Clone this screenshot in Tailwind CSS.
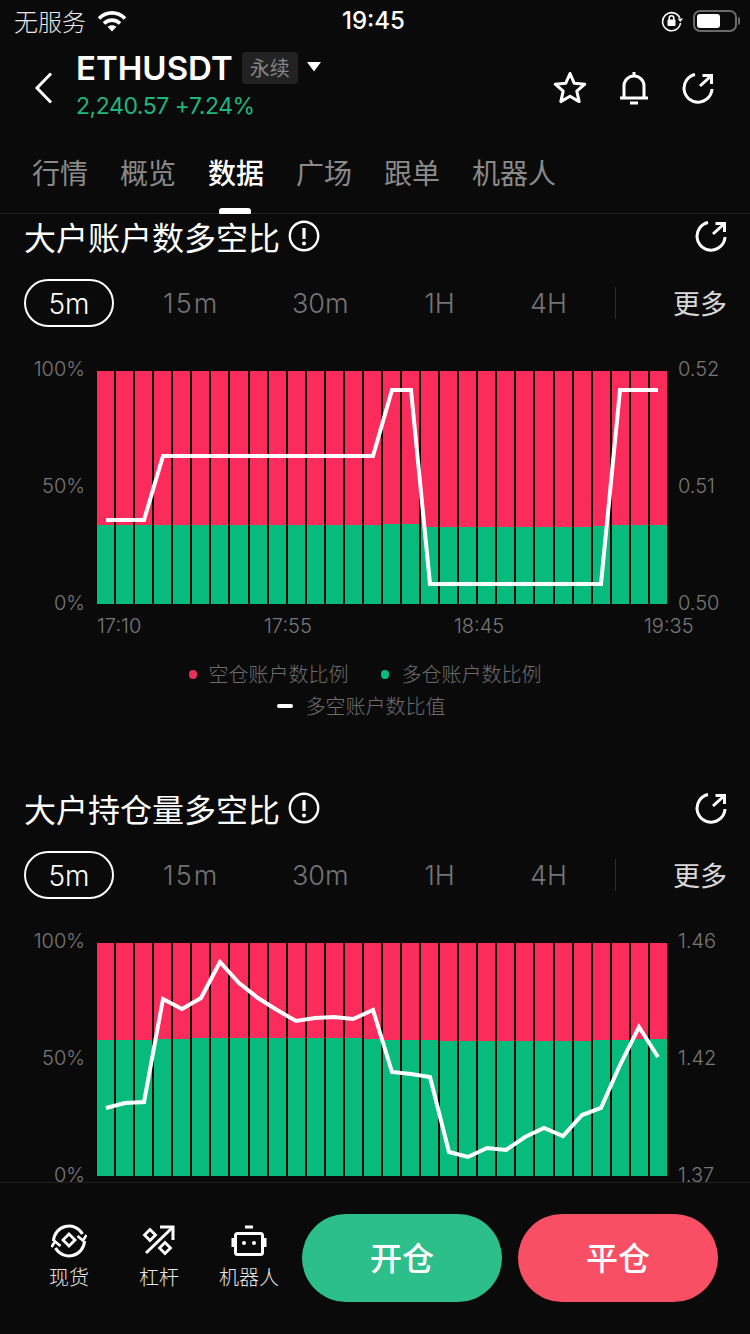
<!DOCTYPE html>
<html lang="zh-CN">
<head>
  <meta charset="UTF-8">
  <meta name="viewport" content="width=device-width, initial-scale=1.0">
  <title>ETHUSDT 数据</title>
  <script src="https://cdn.jsdelivr.net/npm/@tailwindcss/browser@4"></script>
</head>
<body class="bg-[#0a0a0a]">
  <div class="w-[750px] h-[1334px] flex flex-col overflow-hidden bg-[#0a0a0a] text-white font-['Inter','Noto_Sans_CJK_SC',sans-serif]">

    <!-- Status bar -->
    <div class="h-[42px] shrink-0 relative flex items-center pl-[14px] pr-[13px]">
      <span class="text-[24px] leading-[40px] text-[#e8e8e8] font-['Noto_Sans_CJK_SC',sans-serif] font-light">无服务</span>
      <svg class="ml-[11px] w-[30px] h-[22px]" viewBox="0 0 30 22" fill="none" stroke="#fff" stroke-width="3.6">
        <path d="M2 8.5 C9.5 1 20.5 1 28 8.5"/>
        <path d="M7 13.5 C11.5 9 18.5 9 23 13.5"/>
        <path d="M15 21.5 L10.5 16.8 C13 14.7 17 14.7 19.5 16.8 Z" fill="#fff" stroke="none"/>
      </svg>
      <span class="absolute left-[342px] top-[1px] text-[24px] leading-[40px] font-medium">19:45</span>
      <div class="ml-auto flex items-center">
        <svg class="w-[24px] h-[22px] mr-[8px]" viewBox="0 0 24 22" fill="none" stroke="#fff" stroke-width="1.6">
          <path d="M18.8 8 A9 9 0 1 0 19.5 13"/>
          <path d="M16.6 8.5 H22 L19.3 12 Z" fill="#fff" stroke="none"/>
          <rect x="6.5" y="9.5" width="8" height="6.5" rx="1" fill="#fff" stroke="none"/>
          <path d="M8.2 10 V8 A2.3 2.3 0 0 1 12.8 8 V10"/>
        </svg>
        <div class="relative w-[44px] h-[22px] rounded-[7px] border-2 border-[#6a6a6a] p-[2px]">
          <div class="w-[23px] h-full rounded-[3px] bg-white"></div>
          <div class="absolute right-[-5px] top-[5px] w-[2px] h-[8px] bg-[#6a6a6a] rounded-r"></div>
        </div>
      </div>
    </div>

    <!-- Title row -->
    <div class="h-[88px] shrink-0 flex items-start relative">
      <svg class="absolute left-[33px] top-[29px] w-[22px] h-[34px]" viewBox="0 0 22 34" fill="none" stroke="#fff" stroke-width="3">
        <path d="M18 2.5 L4 17 L18 31.5"/>
      </svg>
      <div class="ml-[76px] mt-[6px]">
        <div class="flex items-center h-[40px]">
          <span class="text-[33px] leading-[40px] font-semibold">ETHUSDT</span>
          <span class="ml-[9px] w-[56px] h-[32px] rounded-[4px] bg-[#222222] text-[#858585] text-[20px] leading-[32px] text-center font-['Noto_Sans_CJK_SC',sans-serif]">永续</span>
          <svg class="ml-[9px] w-[14px] h-[10px] mb-[2px]" viewBox="0 0 14 10" fill="#fff"><path d="M0 0 H14 L7 9.5 Z"/></svg>
        </div>
        <div class="text-[23px] leading-[30px] mt-[3px] text-[#1fb57f] tracking-[-0.45px]">2,240.57 +7.24%</div>
      </div>
      <div class="ml-auto flex items-center mr-[36px] mt-[29px]">
        <svg class="w-[34px] h-[34px]" viewBox="0 0 34 34" fill="none" stroke="#fff" stroke-width="3" stroke-linejoin="round">
          <path d="M17 2.5 L21.2 12.2 L31.8 13.2 L23.8 20.2 L26.2 30.6 L17 25.2 L7.8 30.6 L10.2 20.2 L2.2 13.2 L12.8 12.2 Z"/>
        </svg>
        <svg class="ml-[32px] w-[30px] h-[34px]" viewBox="0 0 30 34" fill="none" stroke="#fff" stroke-width="3">
          <path d="M1 27 H29"/>
          <path d="M5 27 V15 A10 10 0 0 1 25 15 V27"/>
          <path d="M15 1 V5"/>
          <path d="M11 32 H19"/>
        </svg>
        <svg class="ml-[33px] w-[32px] h-[32px]" viewBox="0 0 32 32" fill="none" stroke="#fff" stroke-width="3">
          <path d="M13 2.5 A14 14 0 1 0 30 17"/>
          <path d="M18 14 L29 4"/>
          <path d="M20.5 3.5 H29.5 V12"/>
        </svg>
      </div>
    </div>

    <!-- Tabs -->
    <div class="h-[84px] shrink-0 flex items-center gap-[32px] pl-[32px] border-b border-[#1f1f1f] text-[28px] text-[#8a8a8a] font-['Noto_Sans_CJK_SC',sans-serif]">
      <span>行情</span>
      <span>概览</span>
      <span class="relative text-white font-medium">数据
        <span class="absolute left-[11px] top-[57px] w-[32px] h-[6px] rounded-t-[3px] rounded-b-[1px] bg-white"></span>
      </span>
      <span>广场</span>
      <span>跟单</span>
      <span>机器人</span>
    </div>

    <!-- Scrolling content -->
    <div class="flex-1 min-h-0 overflow-hidden">

      <!-- Section 1 -->
      <section class="h-[572px]">
        <div class="h-[44px] flex items-center pl-[24px] pr-[23px]">
          <h2 class="text-[32px] leading-[44px] font-['Noto_Sans_CJK_SC',sans-serif]">大户账户数多空比</h2>
          <svg class="ml-[8px] w-[32px] h-[32px]" viewBox="0 0 32 32" fill="none" stroke="#fff" stroke-width="2.4">
            <circle cx="16" cy="16" r="14.2"/>
            <path d="M16 8 V19" stroke-width="3.2"/>
            <circle cx="16" cy="23.5" r="2" fill="#fff" stroke="none"/>
          </svg>
          <svg class="ml-auto w-[32px] h-[32px]" viewBox="0 0 32 32" fill="none" stroke="#fff" stroke-width="3">
            <path d="M13 2.5 A14 14 0 1 0 30 17"/>
            <path d="M18 14 L29 4"/>
            <path d="M20.5 3.5 H29.5 V12"/>
          </svg>
        </div>
        <div class="mt-[21px] h-[48px] flex items-center pl-[24px] text-[27px] leading-[44px] text-[#747474] font-light text-center">
          <span class="w-[90px] h-[48px] leading-[46px] text-[28px] rounded-full border-2 border-white text-white">5m</span>
          <span class="ml-[49px] w-[55px] mt-[2px] tracking-[2px]">15m</span>
          <span class="ml-[74px] w-[56px] mt-[2px]">30m</span>
          <span class="ml-[75px] w-[33px] mt-[2px]">1H</span>
          <span class="ml-[74px] w-[34px] mt-[2px]">4H</span>
          <span class="ml-[51px] w-px h-[32px] bg-[#2e2e2e]"></span>
          <span class="ml-[57px] text-[27px] text-[#d8d8d8] font-['Noto_Sans_CJK_SC',sans-serif] font-normal whitespace-nowrap">更多</span>
        </div>
        <div class="mt-[44px] h-[233px] flex text-[20px] leading-[20px] text-[#787878] font-light">
          <div class="w-[97px] -mt-[12px] -mb-[9px] pr-[12px] flex flex-col justify-between text-right">
            <span>100%</span><span>50%</span><span>0%</span>
          </div>
          <div class="relative w-[570px] h-[233px]">
            <div class="bars flex gap-[2px] h-full" data-top="79,79,79,79,79,79,79,79,79,79,79,79,79,79,79,80,80,77,77,77,77,77,77,77,77,77,78,79,79,79"></div>
            <svg class="absolute inset-0 w-full h-full" viewBox="97 371 570 233" fill="none" stroke="#fff" stroke-width="4" stroke-linejoin="miter">
              <polyline points="106,520 144,520 163,456 373,456 392,390 411,390 430,584 601,584 620,390 658,390"/>
            </svg>
          </div>
          <div class="pl-[11px] -mt-[12px] -mb-[9px] flex flex-col justify-between">
            <span>0.52</span><span>0.51</span><span>0.50</span>
          </div>
        </div>
        <div class="mt-[12px] h-[20px] pl-[97px] flex text-[20px] leading-[20px] text-[#787878] font-light">
          <span class="w-[167px]">17:10</span>
          <span class="w-[190px]">17:55</span>
          <span class="w-[190px]">18:45</span>
          <span>19:35</span>
        </div>
        <div class="mt-[24px] text-[20px] leading-[28px] text-[#6e6e6e] font-['Noto_Sans_CJK_SC',sans-serif] font-light">
          <div class="flex items-center justify-center pr-[20px]">
            <span class="w-[8px] h-[9px] rounded-full bg-[#e8305a]"></span>
            <span class="ml-[12px]">空仓账户数比例</span>
            <span class="ml-[32px] w-[8px] h-[9px] rounded-full bg-[#06bb7b]"></span>
            <span class="ml-[13px]">多仓账户数比例</span>
          </div>
          <div class="mt-[4px] flex items-center justify-center pr-[28px]">
            <span class="w-[16px] h-[4px] rounded-full bg-white"></span>
            <span class="ml-[13px]">多空账户数比值</span>
          </div>
        </div>
      </section>

      <!-- Section 2 -->
      <section>
        <div class="h-[44px] flex items-center pl-[24px] pr-[23px]">
          <h2 class="text-[32px] leading-[44px] font-['Noto_Sans_CJK_SC',sans-serif]">大户持仓量多空比</h2>
          <svg class="ml-[8px] w-[32px] h-[32px]" viewBox="0 0 32 32" fill="none" stroke="#fff" stroke-width="2.4">
            <circle cx="16" cy="16" r="14.2"/>
            <path d="M16 8 V19" stroke-width="3.2"/>
            <circle cx="16" cy="23.5" r="2" fill="#fff" stroke="none"/>
          </svg>
          <svg class="ml-auto w-[32px] h-[32px]" viewBox="0 0 32 32" fill="none" stroke="#fff" stroke-width="3">
            <path d="M13 2.5 A14 14 0 1 0 30 17"/>
            <path d="M18 14 L29 4"/>
            <path d="M20.5 3.5 H29.5 V12"/>
          </svg>
        </div>
        <div class="mt-[21px] h-[48px] flex items-center pl-[24px] text-[27px] leading-[44px] text-[#747474] font-light text-center">
          <span class="w-[90px] h-[48px] leading-[46px] text-[28px] rounded-full border-2 border-white text-white">5m</span>
          <span class="ml-[49px] w-[55px] mt-[2px] tracking-[2px]">15m</span>
          <span class="ml-[74px] w-[56px] mt-[2px]">30m</span>
          <span class="ml-[75px] w-[33px] mt-[2px]">1H</span>
          <span class="ml-[74px] w-[34px] mt-[2px]">4H</span>
          <span class="ml-[51px] w-px h-[32px] bg-[#2e2e2e]"></span>
          <span class="ml-[57px] text-[27px] text-[#d8d8d8] font-['Noto_Sans_CJK_SC',sans-serif] font-normal whitespace-nowrap">更多</span>
        </div>
        <div class="mt-[44px] h-[233px] flex text-[20px] leading-[20px] text-[#787878] font-light">
          <div class="w-[97px] -mt-[12px] -mb-[9px] pr-[12px] flex flex-col justify-between text-right">
            <span>100%</span><span>50%</span><span>0%</span>
          </div>
          <div class="relative w-[570px] h-[233px]">
            <div class="bars flex gap-[2px] h-full" data-top="136,136,136,137,137,138,138,138,138,138,138,138,138,138,137,136,136,136,135,135,135,135,135,135,135,135,136,136,137,137"></div>
            <svg class="absolute inset-0 w-full h-full" viewBox="97 943 570 233" fill="none" stroke="#fff" stroke-width="4" stroke-linejoin="miter">
              <polyline points="106,1108 125,1103 144,1102 163,999 182,1009 201,998 220,962 239,983 258,998 277,1010 296,1021 315,1018 334,1017 353,1019 373,1010 392,1072 411,1074 430,1077 449,1152 468,1157 487,1148 506,1150 525,1137 544,1128 563,1136 582,1115 601,1108 620,1065 639,1027 658,1057"/>
            </svg>
          </div>
          <div class="pl-[11px] -mt-[12px] -mb-[9px] flex flex-col justify-between">
            <span>1.46</span><span>1.42</span><span>1.37</span>
          </div>
        </div>
      </section>
    </div>

    <!-- Bottom bar -->
    <div class="relative z-10 h-[152px] shrink-0 bg-[#0a0a0a] border-t border-[#1f1f1f] flex items-start">
      <div class="w-[90px] ml-[24px] mt-[39px] flex flex-col items-center">
        <svg class="w-[36px] h-[36px]" viewBox="0 0 36 36" fill="none" stroke="#fff" stroke-width="3">
          <path d="M2.5 19 A15.5 15.5 0 0 1 31.5 12"/>
          <path d="M33.5 19 A15.5 15.5 0 0 1 4.5 26"/>
          <path d="M26.5 14 L32 18.5 L35.5 13" stroke-width="2.6"/>
          <path d="M9.5 24 L4 19.5 L0.5 25" stroke-width="2.6"/>
          <path d="M18 12 L24 18 L18 24 L12 18 Z" stroke-width="2.8"/>
        </svg>
        <span class="mt-[4px] text-[20px] leading-[30px] text-[#e8e8e8] font-['Noto_Sans_CJK_SC',sans-serif] font-light">现货</span>
      </div>
      <div class="w-[90px] mt-[39px] flex flex-col items-center">
        <svg class="w-[36px] h-[36px]" viewBox="0 0 36 36" fill="none" stroke="#fff" stroke-width="3">
          <path d="M5 31 L32 5"/>
          <path d="M19 5 H32 V18"/>
          <path d="M9 7.5 L14.5 13 L9 18.5 L3.5 13 Z" stroke-width="2.8"/>
          <path d="M24 20.5 L29.5 26 L24 31.5 L18.5 26 Z" stroke-width="2.8"/>
        </svg>
        <span class="mt-[4px] text-[20px] leading-[30px] text-[#e8e8e8] font-['Noto_Sans_CJK_SC',sans-serif] font-light">杠杆</span>
      </div>
      <div class="w-[90px] mt-[39px] flex flex-col items-center">
        <svg class="w-[36px] h-[36px]" viewBox="0 0 36 36" fill="none" stroke="#fff" stroke-width="3">
          <rect x="4.5" y="11.5" width="27" height="21" rx="2"/>
          <path d="M14 5 H22"/>
          <rect x="0.5" y="16" width="3" height="9" fill="#fff" stroke="none"/>
          <rect x="32.5" y="16" width="3" height="9" fill="#fff" stroke="none"/>
          <circle cx="13" cy="21" r="2" fill="#fff" stroke="none"/>
          <circle cx="23" cy="21" r="2" fill="#fff" stroke="none"/>
        </svg>
        <span class="mt-[4px] text-[20px] leading-[30px] text-[#e8e8e8] font-['Noto_Sans_CJK_SC',sans-serif] font-light whitespace-nowrap">机器人</span>
      </div>
      <button class="ml-[8px] mt-[31px] w-[200px] h-[88px] pb-[5px] rounded-full bg-[#2dbf8a] text-[32px] font-medium font-['Noto_Sans_CJK_SC',sans-serif] text-white">开仓</button>
      <button class="ml-[16px] mt-[31px] w-[200px] h-[88px] pb-[5px] rounded-full bg-[#f84f65] text-[32px] font-medium font-['Noto_Sans_CJK_SC',sans-serif] text-white">平仓</button>
    </div>
  </div>

  <script>
    // each bar: red on top, green height in px from data-top
    document.querySelectorAll('.bars').forEach(function (chart) {
      chart.dataset.top.split(',').forEach(function (green) {
        const bar = document.createElement('div');
        bar.className = 'flex-1 flex flex-col bg-[#fb2c5b]';
        const fill = document.createElement('div');
        fill.className = 'mt-auto bg-[#06bb7b]';
        fill.style.height = green + 'px';
        bar.appendChild(fill);
        chart.appendChild(bar);
      });
    });
  </script>
</body>
</html>
